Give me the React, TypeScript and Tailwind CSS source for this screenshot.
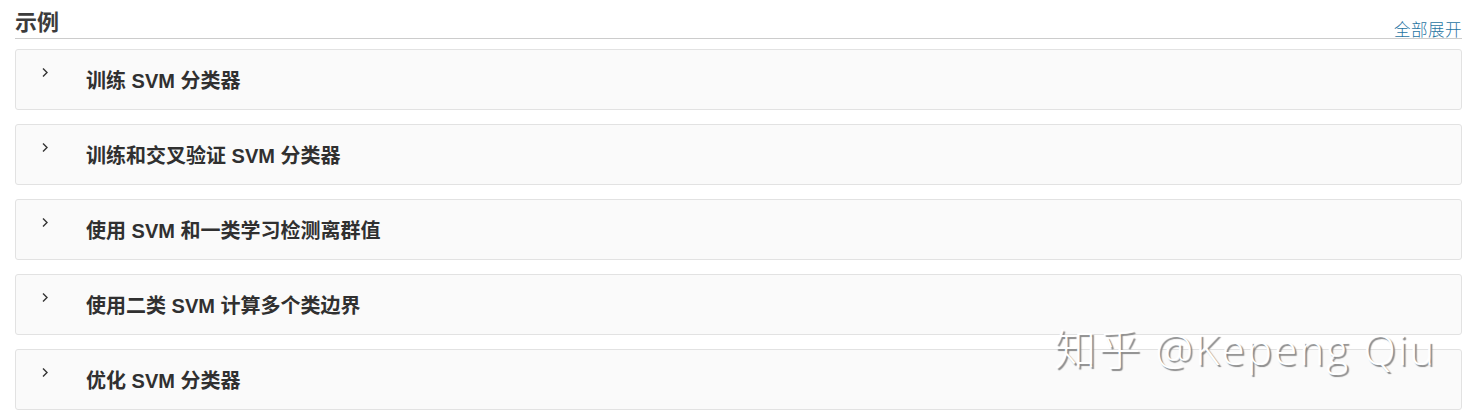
import React from "react";

const items = [
  "训练 SVM 分类器",
  "训练和交叉验证 SVM 分类器",
  "使用 SVM 和一类学习检测离群值",
  "使用二类 SVM 计算多个类边界",
  "优化 SVM 分类器",
];

function Chevron() {
  return (
    <svg width="8" height="11" viewBox="0 0 8 11" className="block">
      <polyline points="2,1.5 6,5.5 2,9.5" fill="none" stroke="#333" strokeWidth="1.4" />
    </svg>
  );
}

export default function App() {
  return (
    <div
      className="relative w-[1472px] h-[417px] bg-white overflow-hidden pl-[15px] pr-[10px] pt-[7px]"
      style={{ fontFamily: '"Liberation Sans", Arial, "Noto Sans CJK SC", sans-serif' }}
    >
      <div className="flex items-end justify-between border-b border-[#cccccc] h-[32px]">
        <h2 className="text-[22px] font-bold text-[#3c3c3c] leading-[26px] mb-[2px]">示例</h2>
        <a
          className="text-[16.5px] leading-[20px] text-[#1f74a2] -mb-[1px] tracking-[0.5px]"
          style={{ fontFamily: '"Noto Sans CJK SC", sans-serif', fontWeight: 300 }}
        >
          全部展开
        </a>
      </div>
      <div className="flex flex-col gap-[14px] mt-[10px]">
        {items.map((t) => (
          <div
            key={t}
            className="h-[61px] border border-[#e2e2e2] bg-[#fafafa] rounded-[3px] flex items-start"
          >
            <div className="ml-[25px] mt-[17px]">
              <Chevron />
            </div>
            <div className="ml-[37px] mt-[19px] text-[20px] leading-[24px] font-bold text-[#303030]">
              {t}
            </div>
          </div>
        ))}
      </div>
      <div
        className="absolute left-[1054px] top-[322px] text-[42px] leading-[54px] text-white whitespace-nowrap tracking-[2.2px]"
        style={{
          fontFamily: '"Open Sans", "Noto Sans CJK SC", sans-serif',
          fontWeight: 300,
          textShadow: "2px 2px 1px #8a8a8a",
        }}
      >
        知乎 @Kepeng Qiu
      </div>
    </div>
  );
}
